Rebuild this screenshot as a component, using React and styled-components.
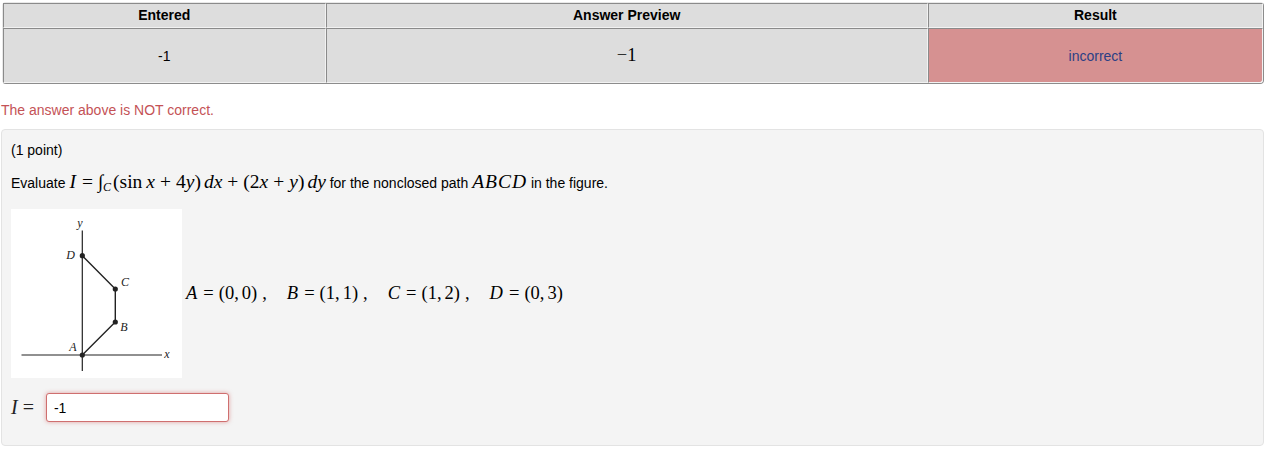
import React from "react";
import styled, { createGlobalStyle } from "styled-components";

const Global = createGlobalStyle`
  html, body { margin: 0; padding: 0; background: #fff; }
  body { font-family: "Liberation Sans", Arial, sans-serif; font-size: 14px; color: #000; }
`;

const Page = styled.div`
  padding: 2px 2px 0 1px;
`;

const Results = styled.table`
  width: calc(100% - 2px);
  margin-left: 1px;
  border-collapse: separate;
  border-spacing: 0;
  border: 1px solid;
  border-color: #e8e8e8 #8c8c8c #8c8c8c #e8e8e8;
  border-radius: 4px;
  font-size: 14px;
`;

const Th = styled.th`
  background: #dddddd;
  border: 1px solid;
  border-color: #8a8a8a #f2f2f2 #f2f2f2 #8a8a8a;
  padding: 3px 4px;
  line-height: 17px;
  font-weight: bold;
  text-align: center;
  width: ${(p) => p.$w};
`;

const Td = styled.td`
  background: ${(p) => (p.$bad ? "#d69191" : "#dddddd")};
  color: ${(p) => (p.$bad ? "#2b3f85" : "#000")};
  border: 1px solid;
  border-color: #8a8a8a #f2f2f2 #f2f2f2 #8a8a8a;
  padding: 19px 4px 17px 4px;
  height: 17px;
  line-height: 17px;
  text-align: center;
  vertical-align: middle;
  border-bottom-right-radius: ${(p) => (p.$last ? "3px" : "0")};
`;

const MathText = styled.span`
  font-family: "Liberation Serif", "DejaVu Serif", serif;
  font-size: ${(p) => p.$size || "18.5px"};
  line-height: 14px;
  white-space: nowrap;
  letter-spacing: ${(p) => p.$ls || "0"};
`;

const Mi = styled.i`
  font-family: "Liberation Serif", "DejaVu Serif", serif;
  font-style: italic;
  margin-right: ${(p) => p.$mr || "0"};
`;

const Op = styled.span`
  margin: 0 ${(p) => p.$m || "5px"};
`;

const Thin = styled.span`
  display: inline-block;
  width: ${(p) => p.$w || "3px"};
`;

const Integral = styled.span`
  font-size: 19px;
  font-style: italic;
`;

const Sub = styled.sub`
  font-size: 12px;
  line-height: 0;
  font-style: italic;
  vertical-align: -3px;
  margin-right: 2px;
`;

const ErrorMsg = styled.div`
  color: #c45256;
  line-height: 16px;
  margin: 18px 0 11px 0;
`;

const Problem = styled.div`
  background: #f4f4f4;
  border: 1px solid #e3e3e3;
  border-radius: 4px;
  padding: 12px 9px 23px 9px;
  margin-right: 1px;
`;

const Para = styled.div`
  line-height: 16px;
  margin-bottom: ${(p) => p.$mb || "0"};
`;

const FigureRow = styled.div`
  display: flex;
  align-items: center;
  gap: 4px;
  margin-bottom: 15px;
`;

const FigureBox = styled.div`
  width: 171px;
  height: 169px;
  background: #fff;
  flex: none;
`;

const Coords = styled.div`
  display: flex;
  gap: 20px;
  font-family: "Liberation Serif", "DejaVu Serif", serif;
  font-size: 18.5px;
`;

const AnswerRow = styled.div`
  display: flex;
  align-items: center;
  gap: 12px;
`;

const AnswerLabel = styled.span`
  font-family: "Liberation Serif", "DejaVu Serif", serif;
  font-size: 20px;
  color: #222;
`;

const Input = styled.input`
  width: 183px;
  height: 29px;
  box-sizing: border-box;
  border: 1px solid #cf6f6f;
  border-radius: 3px;
  box-shadow: 0 0 4px rgba(210, 90, 90, 0.55);
  padding: 0 7px;
  font-family: "Liberation Sans", Arial, sans-serif;
  font-size: 14px;
  color: #000;
  background: #fff;
  outline: none;
`;

function Figure() {
  const lbl = {
    fontFamily: "Liberation Serif, serif",
    fontStyle: "italic",
    fontSize: 12,
    fill: "#222",
  };
  return (
    <svg width="171" height="169" viewBox="0 0 171 169">
      <g stroke="#222" strokeWidth="1.2" fill="none">
        <line x1="71.3" y1="21.5" x2="71.3" y2="162" />
        <line x1="10.5" y1="146" x2="151" y2="146" />
        <polyline points="71.3,146 104.3,113 104.3,80 71.3,46.7" strokeWidth="1.4" />
      </g>
      <g fill="#222">
        <circle cx="71.3" cy="146" r="2.6" />
        <circle cx="104.3" cy="113" r="2.6" />
        <circle cx="104.3" cy="80" r="2.6" />
        <circle cx="71.3" cy="46.7" r="2.6" />
      </g>
      <g style={lbl} textAnchor="middle" dominantBaseline="central">
        <text x="69" y="14">y</text>
        <text x="59.5" y="46">D</text>
        <text x="114" y="72.5">C</text>
        <text x="113" y="117.5">B</text>
        <text x="62" y="137.5">A</text>
        <text x="156" y="145">x</text>
      </g>
    </svg>
  );
}

function Point({ name, x, y, last }) {
  return (
    <span>
      <Mi $mr="1px">{name}</Mi>
      <Op $m="5px">=</Op>({x},<Thin $w="3px" />{y})<Thin $w="5px" />
      {last ? null : ","}
    </span>
  );
}

export default function App() {
  return (
    <Page>
      <Global />
      <Results>
        <thead>
          <tr>
            <Th $w="25.6%">Entered</Th>
            <Th $w="47.8%">Answer Preview</Th>
            <Th>Result</Th>
          </tr>
        </thead>
        <tbody>
          <tr>
            <Td>-1</Td>
            <Td>
              <MathText>−1</MathText>
            </Td>
            <Td $bad $last>incorrect</Td>
          </tr>
        </tbody>
      </Results>
      <ErrorMsg>The answer above is NOT correct.</ErrorMsg>
      <Problem>
        <Para $mb="17px">(1 point)</Para>
        <Para $mb="18px">
          Evaluate{" "}
          <MathText $size="19.5px">
            <Mi $mr="1px">I</Mi>
            <Op $m="5px">=</Op>
            <Integral>∫</Integral>
            <Sub>C</Sub>
            (sin<Thin $w="4px" />
            <Mi>x</Mi>
            <Op>+</Op>4<Mi>y</Mi>)<Thin $w="3px" />
            <Mi>dx</Mi>
            <Op>+</Op>(2<Mi>x</Mi>
            <Op>+</Op>
            <Mi>y</Mi>)<Thin $w="3px" />
            <Mi>dy</Mi>
          </MathText>{" "}
          for the nonclosed path{" "}
          <MathText $size="19.5px" $ls="1px">
            <Mi>ABCD</Mi>
          </MathText>{" "}
          in the figure.
        </Para>
        <FigureRow>
          <FigureBox>
            <Figure />
          </FigureBox>
          <Coords>
            <Point name="A" x="0" y="0" />
            <Point name="B" x="1" y="1" />
            <Point name="C" x="1" y="2" />
            <Point name="D" x="0" y="3" last />
          </Coords>
        </FigureRow>
        <AnswerRow>
          <AnswerLabel>
            <Mi>I</Mi> =
          </AnswerLabel>
          <Input defaultValue="-1" />
        </AnswerRow>
      </Problem>
    </Page>
  );
}
